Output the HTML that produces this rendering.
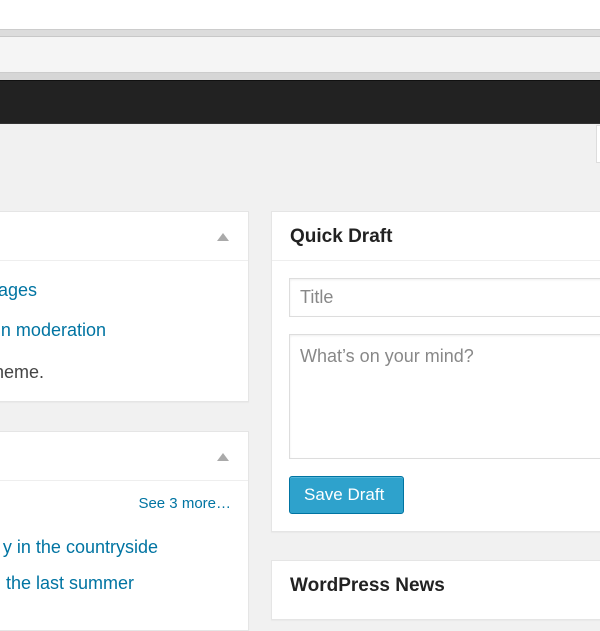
<!DOCTYPE html>
<html><head><style>
*{margin:0;padding:0;box-sizing:border-box}
body{width:600px;height:600px;overflow:hidden;background:#f1f1f1;position:relative;font-family:"Liberation Sans",sans-serif}
.a{position:absolute}
.box{position:absolute;background:#fff;border:1px solid #e5e5e5;box-shadow:0 1px 1px rgba(0,0,0,.04)}
.t{position:absolute;white-space:nowrap;line-height:1}
.lnk{color:#0074a2;font-size:18px}
.tri{position:absolute;width:0;height:0;border-left:6px solid transparent;border-right:6px solid transparent;border-bottom:8px solid #aaa}
</style></head><body>
<div class="a" style="left:0;top:0;width:600px;height:29px;background:#fff"></div>
<div class="a" style="left:0;top:29px;width:600px;height:8px;background:#dcdcdc;border-top:1px solid #ccc;border-bottom:1px solid #c8c8c8"></div>
<div class="a" style="left:0;top:37px;width:600px;height:35px;background:#f5f5f5"></div>
<div class="a" style="left:0;top:72px;width:600px;height:8px;background:#d6d6d6;border-top:1px solid #ccc"></div>
<div class="a" style="left:0;top:80px;width:600px;height:44px;background:#222;border-top:1px solid #111;border-bottom:1px solid #333"></div>
<div class="a" style="left:596px;top:125px;width:10px;height:38px;background:#fff;border:1px solid #ddd"></div>

<div class="box" style="left:-5px;top:211px;width:254px;height:191px"></div>
<div class="a" style="left:0;top:260px;width:248px;height:1px;background:#eee"></div>
<div class="tri" style="left:217px;top:233px"></div>
<div class="t lnk" style="right:563px;top:281px">ages</div>
<div class="t lnk" style="right:494px;top:321px">n moderation</div>
<div class="t" style="right:556px;top:363px;font-size:18px;color:#444">heme.</div>

<div class="box" style="left:-5px;top:431px;width:254px;height:200px"></div>
<div class="a" style="left:0;top:480px;width:248px;height:1px;background:#eee"></div>
<div class="tri" style="left:217px;top:453px"></div>
<div class="t" style="right:369px;top:496px;font-size:15px;color:#0074a2">See 3 more…</div>
<div class="t lnk" style="right:442px;top:538px">y in the countryside</div>
<div class="t lnk" style="right:466px;top:574px">the last summer</div>

<div class="box" style="left:271px;top:211px;width:340px;height:321px"></div>
<div class="a" style="left:272px;top:260px;width:330px;height:1px;background:#eee"></div>
<div class="t" style="left:290px;top:227px;font-size:19px;font-weight:bold;color:#222">Quick Draft</div>
<div class="a" style="left:289px;top:278px;width:320px;height:39px;border:1px solid #ddd;background:#fff;box-shadow:inset 0 1px 2px rgba(0,0,0,.07)"></div>
<div class="t" style="left:300px;top:288px;font-size:18px;color:#888">Title</div>
<div class="a" style="left:289px;top:334px;width:320px;height:125px;border:1px solid #ddd;background:#fff;box-shadow:inset 0 1px 2px rgba(0,0,0,.07)"></div>
<div class="t" style="left:300px;top:347px;font-size:18px;color:#888">What’s on your mind?</div>
<div class="a" style="left:289px;top:476px;width:115px;height:38px;background:#2ea2cc;border:1px solid #0074a2;border-radius:3px;box-shadow:inset 0 1px 0 rgba(120,200,230,.5)"></div>
<div class="t" style="left:304px;top:486px;font-size:17px;color:#fff">Save Draft</div>

<div class="box" style="left:271px;top:560px;width:340px;height:60px"></div>
<div class="t" style="left:290px;top:576px;font-size:19px;font-weight:bold;color:#222">WordPress News</div>
</body></html>
